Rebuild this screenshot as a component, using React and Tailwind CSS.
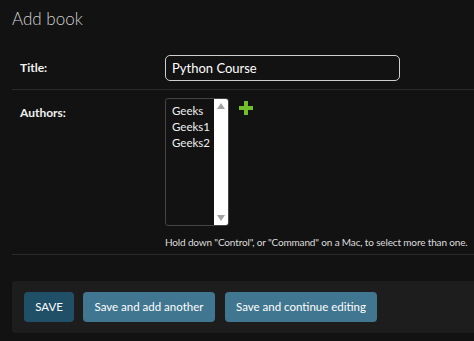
export default function App() {
    const font = { fontFamily: '"Segoe UI", Lato, "Noto Sans", sans-serif' };
    return (
        <div className="w-[474px] h-[341px] overflow-hidden bg-[#121212] text-[#eeeeee]" style={font}>
            <h1 className="pl-[12px] pt-[5px] text-[17px] font-light text-[#d0d0d0] leading-[28px]">Add book</h1>

            <div className="ml-[12px] mt-[13px]">
                <div className="flex items-center h-[44px] border-b border-[#2a2a2a]">
                    <label className="w-[153px] shrink-0 pl-[8px] text-[12px] font-bold text-[#f0f0f0]">Title:</label>
                    <input
                        type="text"
                        defaultValue="Python Course"
                        className="w-[235px] h-[26px] px-[6px] rounded-[5px] border border-[#cfcfcf] bg-[#121212] text-[13px] text-white outline-none"
                    />
                </div>

                <div className="flex h-[165px] border-b border-[#2a2a2a] pt-[8px]">
                    <label className="w-[153px] shrink-0 pl-[8px] pt-[6px] text-[12px] font-bold text-[#f0f0f0]">Authors:</label>
                    <div className="flex flex-col">
                        <div className="flex items-start">
                            <div className="flex w-[64px] h-[128px] rounded-[3px] border border-[#444] overflow-hidden">
                                <div className="flex-1 pl-[6px] pt-[4px] text-[11.5px] leading-[16px] text-[#f0f0f0]">
                                    <div>Geeks</div>
                                    <div>Geeks1</div>
                                    <div>Geeks2</div>
                                </div>
                                <div className="w-[14px] bg-white flex flex-col justify-between items-center py-[4px]">
                                    <svg width="8" height="6" viewBox="0 0 8 6"><path d="M4 0 L8 6 L0 6 Z" fill="#a3a3a3" /></svg>
                                    <svg width="8" height="6" viewBox="0 0 8 6"><path d="M0 0 L8 0 L4 6 Z" fill="#a3a3a3" /></svg>
                                </div>
                            </div>
                            <svg className="ml-[10px] mt-[3px]" width="14" height="14" viewBox="0 0 14 14">
                                <rect x="5" y="0" width="4" height="14" fill="#70bf2b" />
                                <rect x="0" y="5" width="14" height="4" fill="#70bf2b" />
                            </svg>
                        </div>
                        <p className="mt-[9px] text-[10px] tracking-[-0.15px] text-[#dddddd] whitespace-nowrap">Hold down "Control", or "Command" on a Mac, to select more than one.</p>
                    </div>
                </div>

                <div className="mt-[26px] h-[52px] bg-[#1d1d1d] flex items-center pl-[12px] rounded-l-[3px]">
                    <button className="w-[50px] h-[30px] rounded-[4px] bg-[#205067] text-[11.5px] text-white">SAVE</button>
                    <button className="ml-[9px] w-[132px] h-[30px] rounded-[4px] bg-[#417690] text-[11.5px] text-white">Save and add another</button>
                    <button className="ml-[10px] w-[152px] h-[30px] rounded-[4px] bg-[#417690] text-[11.5px] text-white">Save and continue editing</button>
                </div>
            </div>
        </div>
    );
}
